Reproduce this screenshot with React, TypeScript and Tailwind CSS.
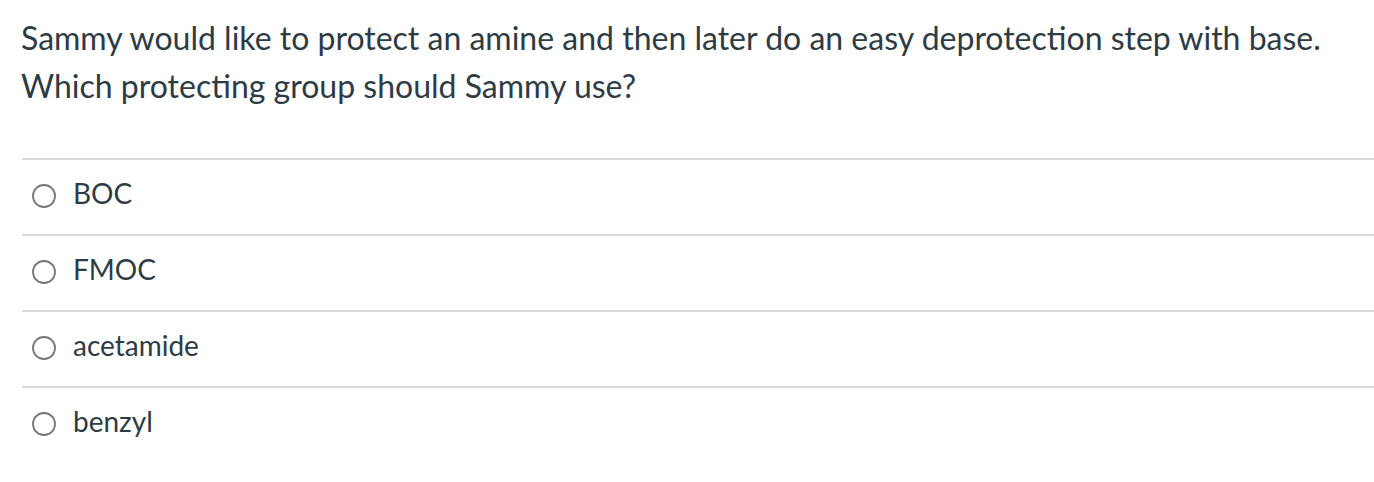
const options = ['BOC', 'FMOC', 'acetamide', 'benzyl']

function Radio() {
  return (
    <svg width="24" height="24" viewBox="0 0 24 24" className="mt-[12px] shrink-0">
      <circle cx="12" cy="12" r="11" fill="white" stroke="#757575" strokeWidth="1.8" />
    </svg>
  )
}

export default function App() {
  return (
    <div className="min-h-[482px] w-full bg-white text-[#2d3b45] font-['Lato','Liberation_Sans',sans-serif] text-[28px]">
      {/* 問題文 */}
      <div className="pl-[21px] pt-[14px] text-[32px] leading-[48px]">
        Sammy would like to protect an amine and then later do an easy deprotection step with base. Which
        protecting group should Sammy use?
      </div>

      {/* 選択肢 */}
      <div className="ml-[22px] mt-[48px]">
        {options.map((opt) => (
          <div
            key={opt}
            className="flex items-start gap-[17px] border-t-2 border-[#dadada] pt-3 pb-[20px] pl-[10px]"
          >
            <Radio />
            <span className="leading-[42px]">{opt}</span>
          </div>
        ))}
      </div>
    </div>
  )
}
